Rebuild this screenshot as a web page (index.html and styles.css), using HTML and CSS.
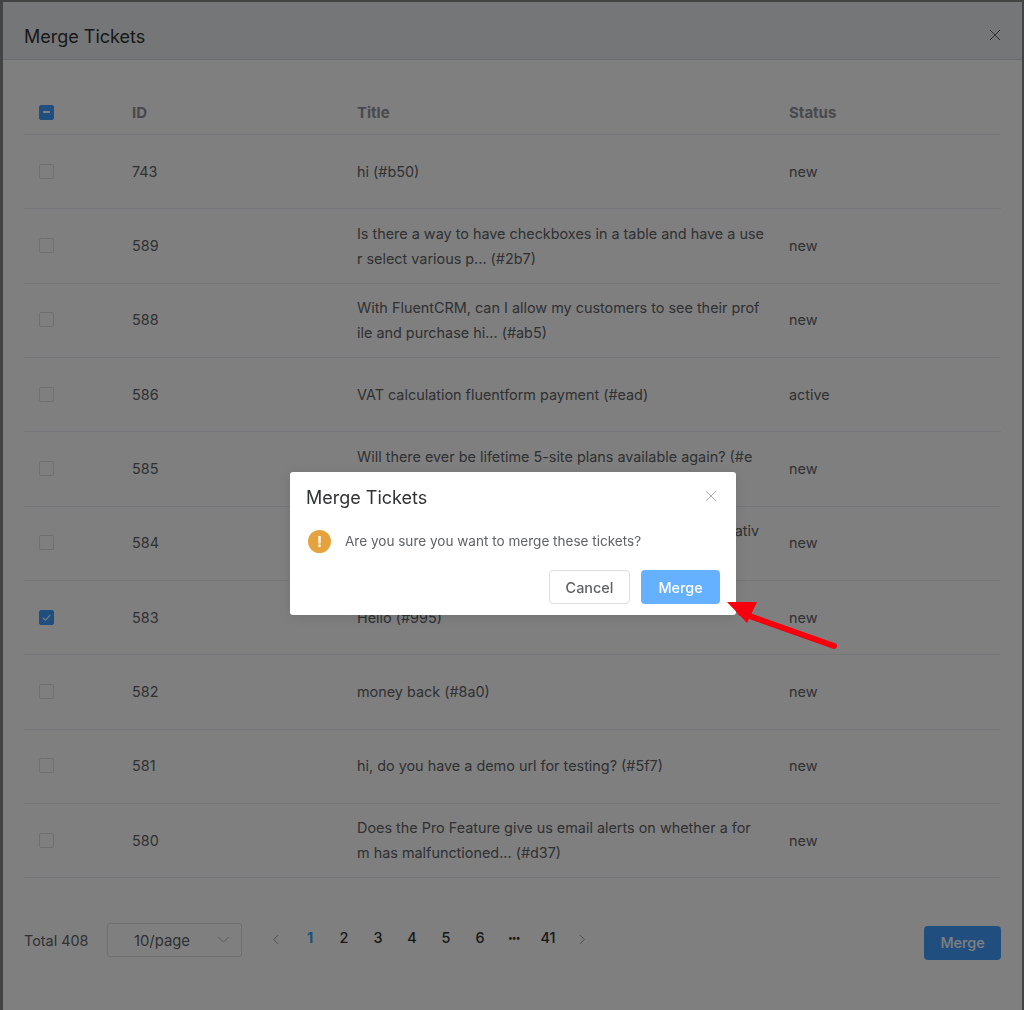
FILE: index.html
```html
<!DOCTYPE html>
<html lang="en">
<head>
<meta charset="utf-8">
<title>Merge Tickets</title>
<link rel="stylesheet" href="styles.css">
</head>
<body>
<div class="page">
  <div class="panel">
    <header class="panel-head">
      <h2 class="panel-title">Merge Tickets</h2>
      <svg class="x-icon panel-x" viewBox="0 0 12 12"><path d="M1 1l10 10M11 1L1 11"/></svg>
    </header>
    <div class="panel-body">
      <div class="table">
        <div class="row head">
          <div class="cell check"><span class="box on minus"></span></div>
          <div class="cell">ID</div><div class="cell">Title</div><div class="cell">Status</div>
        </div>
        <div class="row"><div class="cell check"><span class="box"></span></div><div class="cell">743</div><div class="cell title">hi (#b50)</div><div class="cell">new</div></div>
        <div class="row"><div class="cell check"><span class="box"></span></div><div class="cell">589</div><div class="cell title">Is there a way to have checkboxes in a table and have a use<br>r select various p... (#2b7)</div><div class="cell">new</div></div>
        <div class="row"><div class="cell check"><span class="box"></span></div><div class="cell">588</div><div class="cell title">With FluentCRM, can I allow my customers to see their prof<br>ile and purchase hi... (#ab5)</div><div class="cell">new</div></div>
        <div class="row"><div class="cell check"><span class="box"></span></div><div class="cell">586</div><div class="cell title">VAT calculation fluentform payment (#ead)</div><div class="cell">active</div></div>
        <div class="row"><div class="cell check"><span class="box"></span></div><div class="cell">585</div><div class="cell title">Will there ever be lifetime 5-site plans available again? (#e<br>21)</div><div class="cell">new</div></div>
        <div class="row"><div class="cell check"><span class="box"></span></div><div class="cell">584</div><div class="cell title">Is there a plugin I can use with forms as a greater alternativ<br>e... (#c14)</div><div class="cell">new</div></div>
        <div class="row"><div class="cell check"><span class="box on"><svg viewBox="0 0 14 14"><path d="M3 7.2l2.8 2.8L11 4.4"/></svg></span></div><div class="cell">583</div><div class="cell title">Hello (#995)</div><div class="cell">new</div></div>
        <div class="row"><div class="cell check"><span class="box"></span></div><div class="cell">582</div><div class="cell title">money back (#8a0)</div><div class="cell">new</div></div>
        <div class="row"><div class="cell check"><span class="box"></span></div><div class="cell">581</div><div class="cell title">hi, do you have a demo url for testing? (#5f7)</div><div class="cell">new</div></div>
        <div class="row"><div class="cell check"><span class="box"></span></div><div class="cell">580</div><div class="cell title">Does the Pro Feature give us email alerts on whether a for<br>m has malfunctioned... (#d37)</div><div class="cell">new</div></div>
      </div>
      <footer class="foot">
        <span class="total">Total 408</span>
        <div class="select"><span class="select-val">10/page</span>
          <svg class="chev" viewBox="0 0 14 8"><path d="M1 1l6 6 6-6"/></svg>
        </div>
        <nav class="pager">
          <span class="pg arrow"><svg viewBox="0 0 8 12"><path d="M6.5 1L1.5 6l5 5"/></svg></span>
          <span class="pg cur">1</span><span class="pg">2</span><span class="pg">3</span><span class="pg">4</span><span class="pg">5</span><span class="pg">6</span><span class="pg dots">•••</span><span class="pg">41</span>
          <span class="pg arrow"><svg viewBox="0 0 8 12"><path d="M1.5 1l5 5-5 5"/></svg></span>
        </nav>
        <button class="btn-merge">Merge</button>
      </footer>
    </div>
  </div>
</div>
<div class="overlay"></div>
<div class="modal">
  <div class="modal-head">
    <span class="modal-title">Merge Tickets</span>
    <svg class="x-icon modal-x" viewBox="0 0 12 12"><path d="M1 1l10 10M11 1L1 11"/></svg>
  </div>
  <div class="modal-msg">
    <span class="warn">!</span>
    <span>Are you sure you want to merge these tickets?</span>
  </div>
  <div class="modal-btns">
    <button class="btn cancel">Cancel</button>
    <button class="btn confirm">Merge</button>
  </div>
</div>
<svg class="arrow-mark" viewBox="0 0 120 60">
  <path class="shaft" d="M14 11L107 44"/>
  <polygon class="head" points="0,0 30,0 20,21"/>
</svg>
</body>
</html>
```
FILE: styles.css
```css
* { box-sizing: border-box; }
html, body { margin: 0; height: 100%; }
body { font-family: Inter, "Liberation Sans", sans-serif; color: #606266; overflow: hidden; }
.page { height: 1010px; background: #868688; padding: 2px 2px 0 3px; }
.panel { height: 100%; background: #fff; border-radius: 2px 2px 0 0; }
.panel-head { height: 58px; background: #ebecee; border-bottom: 1px solid #d5d7da; display: flex; align-items: center; justify-content: space-between; padding: 10px 21px 0 21px; }
.panel-title { margin: 0; font-size: 18px; font-weight: 400; color: #303133; position: relative; top: 1px; }
.x-icon { width: 12px; height: 12px; fill: none; stroke-width: 1; }
.panel-x { stroke: #606266; margin-top: -2px; }
.panel-body { padding: 30px 21px 0 21px; }
.row { display: grid; grid-template-columns: 108px 225px 432px 1fr; height: 74.35px; padding-bottom: 1px; border-bottom: 1px solid #ebeef5; align-items: center; font-size: 14.4px; }
.row.head { height: 45px; padding-bottom: 0; font-weight: 700; font-size: 15px; color: #909399; }
.cell { line-height: 25px; }
.check { padding-left: 15px; display: flex; align-items: center; }
.title { white-space: nowrap; }
.box { width: 15px; height: 15px; border: 1px solid #dcdfe6; border-radius: 2px; background: #fff; display: block; position: relative; }
.box.on { background: #409eff; border-color: #409eff; }
.box.minus::after { content: ""; position: absolute; left: 3px; right: 3px; top: 5px; height: 2px; background: #fff; }
.box svg { display: block; width: 13px; height: 13px; fill: none; stroke: #fff; stroke-width: 1.2; }
.foot { display: flex; align-items: center; margin-top: 43px; height: 37px; }
.total { font-size: 14.4px; width: 83px; position: relative; top: 1px; }
.select { width: 135px; height: 34px; border: 1px solid #dcdfe6; border-radius: 3px; display: flex; align-items: center; justify-content: space-between; padding: 0 11px 0 26px; font-size: 14.8px; }
.select-val { position: relative; top: 1px; }
.chev { width: 13px; height: 7px; fill: none; stroke: #a8abb2; stroke-width: 1; }
.pager { display: flex; margin-left: 17px; font-size: 14.4px; color: #303133; }
.pg { width: 34px; text-align: center; line-height: 26px; margin-top: -4px; font-weight: 500; }
.pg.cur { color: #409eff; font-weight: 700; }
.pg.dots { font-size: 9px; font-weight: 700; letter-spacing: -.5px; }
.pg.arrow { display: flex; align-items: center; justify-content: center; margin-top: 0; }
.arrow svg { width: 8px; height: 11px; fill: none; stroke: #909399; stroke-width: 1; }
.btn-merge { margin-left: auto; width: 77px; height: 34px; background: #409eff; color: #fff; border: 0; border-radius: 4px; font: 500 14.4px Inter, "Liberation Sans", sans-serif; position: relative; top: 3px; }
.overlay { position: fixed; inset: 0; background: rgba(0, 0, 0, .5); }
.modal { position: absolute; left: 290px; top: 472px; width: 446px; height: 143px; background: #fff; border-radius: 3px; padding: 0 16px; box-shadow: 0 2px 12px rgba(0, 0, 0, .1); }
.modal-head { display: flex; justify-content: space-between; align-items: center; height: 51px; }
.modal-title { font-size: 18px; color: #303133; }
.modal-x { stroke: #a8abb2; margin-right: 3px; margin-top: -3px; }
.modal-msg { display: flex; align-items: center; gap: 14px; height: 36px; font-size: 13.55px; padding-left: 2px; }
.warn { width: 23px; height: 23px; border-radius: 50%; background: #e6a23c; color: #fff; font-size: 15px; font-weight: 700; display: flex; align-items: center; justify-content: center; }
.modal-btns { display: flex; justify-content: flex-end; gap: 11px; margin-top: 11px; }
.btn { height: 34px; border-radius: 4px; font: 500 14.4px Inter, "Liberation Sans", sans-serif; }
.cancel { width: 81px; background: #fff; border: 1px solid #dcdfe6; color: #606266; }
.confirm { width: 79px; background: #66b1ff; border: 0; color: #fff; }
.arrow-mark { position: absolute; left: 727px; top: 602px; width: 120px; height: 60px; }
.shaft { stroke: #f5000c; stroke-width: 6; stroke-linecap: round; fill: none; }
.head { fill: #f5000c; }
```
